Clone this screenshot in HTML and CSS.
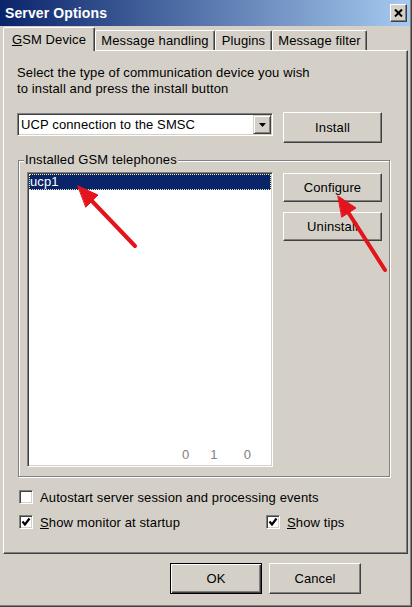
FILE: index.html
```html
<!DOCTYPE html>
<html lang="en">
<head>
  <meta charset="UTF-8">
  <meta name="viewport" content="width=device-width, initial-scale=1.0">
  <title>Server Options</title>
  <link rel="stylesheet" href="styles.css">
</head>
<body>
  <div class="window">
    <div class="titlebar">
      <span class="title">Server Options</span>
      <span class="close">
        <svg width="9" height="8" viewBox="0 0 9 8"><path d="M1 0.5 L8 7.5 M8 0.5 L1 7.5" stroke="#000" stroke-width="2"/></svg>
      </span>
    </div>
    <div class="tabs">
      <div class="tab active"><u>G</u>SM Device</div>
      <div class="tab t-msg">Message handling</div>
      <div class="tab t-plug">Plugins</div>
      <div class="tab t-filter">Message filter</div>
    </div>
    <div class="panel">
      <p class="intro">Select the type of communication device you wish<br>to install and press the install button</p>
      <div class="install-row">
        <div class="combo">
          <span class="combo-text">UCP connection to the SMSC</span>
          <span class="combo-btn">
            <svg width="7" height="4" viewBox="0 0 7 4"><path d="M0 0 H7 L3.5 4 Z" fill="#000"/></svg>
          </span>
        </div>
        <button class="btn install">Install</button>
      </div>
      <div class="group">
        <div class="group-label">Installed GSM telephones</div>
        <div class="group-body">
          <div class="listbox">
            <div class="list-item selected">ucp1</div>
            <div class="list-counts"><span>0</span><span class="c2">1</span><span class="c3">0</span></div>
          </div>
          <div class="side-btns">
            <button class="btn side">Configure</button>
            <button class="btn side">Uninstall</button>
          </div>
        </div>
      </div>
      <div class="options">
        <div class="check"><span class="box"></span>Autostart server session and processing events</div>
        <div class="options-row">
          <div class="check">
            <span class="box"><svg width="10" height="10" viewBox="0 0 10 10"><path d="M1.5 4.5 L4 7.5 L8.5 1.5" fill="none" stroke="#000" stroke-width="2.2"/></svg></span>
            <span><u>S</u>how monitor at startup</span>
          </div>
          <div class="check">
            <span class="box"><svg width="10" height="10" viewBox="0 0 10 10"><path d="M1.5 4.5 L4 7.5 L8.5 1.5" fill="none" stroke="#000" stroke-width="2.2"/></svg></span>
            <span><u>S</u>how tips</span>
          </div>
        </div>
      </div>
    </div>
    <div class="footer">
      <button class="btn dlg default">OK</button>
      <button class="btn dlg">Cancel</button>
    </div>
    <!-- red annotation arrows from the screenshot -->
    <svg class="arrows" width="412" height="607" viewBox="0 0 412 607">
      <g stroke="#E3141C" stroke-width="4" stroke-linecap="round" fill="#E3141C">
        <line x1="135" y1="246" x2="91" y2="200"/>
        <polygon points="78,186 98,195 86,207" stroke-width="1"/>
        <line x1="385" y1="270" x2="348" y2="212"/>
        <polygon points="338,196 356,208 342,217" stroke-width="1"/>
      </g>
    </svg>
  </div>
</body>
</html>
```

FILE: styles.css
```css
body { margin: 0; background: #D4D0C8; font-family: "Liberation Sans", Arial, sans-serif; font-size: 13px; letter-spacing: 0.12px; color: #000; }
.window { position: relative; width: 412px; height: 607px; box-sizing: border-box; padding: 0 1px 1px 0; border-right: 1px solid #404040; border-bottom: 1px solid #404040; box-shadow: inset -1px -1px #808080; background: #D4D0C8; }

.titlebar { height: 26px; box-sizing: border-box; display: flex; align-items: center; justify-content: space-between; padding: 0 3px 0 5px; background: linear-gradient(to right, #0A246A, #A6CAF0); color: #fff; font-weight: bold; font-size: 14px; }
.close { width: 17px; height: 18px; box-sizing: border-box; display: flex; align-items: center; justify-content: center; background: #D4D0C8; border: 1px solid; border-color: #fff #404040 #404040 #fff; box-shadow: inset -1px -1px #808080; }

.tabs { display: flex; align-items: flex-end; height: 23px; margin-top: 1px; padding-left: 3px; position: relative; z-index: 1; }
.tab { height: 20px; box-sizing: border-box; display: flex; align-items: center; justify-content: center; border: 1px solid; border-bottom: 0; border-color: #fff #404040 transparent #fff; border-radius: 2px 2px 0 0; box-shadow: inset -1px 0 #808080; background: #D4D0C8; white-space: nowrap; }
.tab.active { width: 92px; height: 24px; margin-bottom: -1px; }
.tab.t-msg { width: 120px; }
.tab.t-plug { width: 57px; }
.tab.t-filter { width: 95px; }

.panel { margin-left: 3px; width: 405px; height: 504px; box-sizing: border-box; padding-left: 13px; border: 1px solid; border-color: #fff #404040 #404040 #fff; box-shadow: inset -1px -1px #808080; }
.intro { margin: 14px 0 0; line-height: 16px; }

.install-row { display: flex; align-items: flex-start; margin-top: 15px; }
.combo { width: 256px; height: 23px; margin-top: 1px; box-sizing: border-box; display: flex; align-items: center; background: #fff; border: 1px solid; border-color: #808080 #fff #fff #808080; box-shadow: inset 1px 1px #404040, inset -1px -1px #D4D0C8; padding: 1px; }
.combo-text { flex: 1; padding-left: 2px; }
.combo-btn { width: 18px; height: 19px; box-sizing: border-box; display: flex; align-items: center; justify-content: center; background: #D4D0C8; border: 1px solid; border-color: #D4D0C8 #404040 #404040 #D4D0C8; box-shadow: inset 1px 1px #fff, inset -1px -1px #808080; }

.btn { font: inherit; letter-spacing: inherit; color: #000; background: #D4D0C8; border: 1px solid; border-color: #fff #404040 #404040 #fff; box-shadow: inset -1px -1px #808080; padding: 0; }
.btn.install { margin-left: 10px; width: 99px; height: 31px; }
.btn.side { width: 99px; height: 29px; }
.btn.dlg { width: 92px; height: 31px; }
.btn.default { border-color: #000; box-shadow: inset 1px 1px #fff, inset -1px -1px #404040, inset -2px -2px #808080; }

.group { margin: 17px 0 0 1px; width: 372px; box-sizing: border-box; border: 1px solid #808080; box-shadow: 1px 1px #fff, inset 1px 1px #fff; padding: 0 7px 9px 8px; }
.group-label { width: max-content; margin: -9px 0 0 -3px; padding: 0 1px; line-height: 16px; background: #D4D0C8; }
.group-body { display: flex; margin-top: 4px; }
.listbox { width: 246px; height: 295px; box-sizing: border-box; display: flex; flex-direction: column; padding: 1px; background: #fff; border: 1px solid; border-color: #808080 #fff #fff #808080; box-shadow: inset 1px 1px #404040, inset -1px -1px #D4D0C8; }
.list-item { height: 16px; line-height: 16px; padding-left: 1px; }
.list-item.selected { background: #0A246A; color: #fff; outline: 1px dotted #E8E8C0; outline-offset: -1px; }
.list-counts { margin-top: auto; margin-bottom: 2px; padding-left: 153px; line-height: 16px; color: #808080; }
.list-counts .c2 { margin-left: 21px; }
.list-counts .c3 { margin-left: 26px; }
.side-btns { display: flex; flex-direction: column; gap: 10px; margin: 1px 0 0 10px; }

.options { margin-top: 11px; }
.options-row { display: grid; grid-template-columns: 247px auto; margin-top: 7px; }
.check { display: flex; align-items: center; gap: 7px; height: 18px; margin-left: 2px; }
.box { width: 14px; height: 14px; box-sizing: border-box; display: flex; align-items: center; justify-content: center; background: #fff; border: 1px solid; border-color: #808080 #fff #fff #808080; box-shadow: inset 1px 1px #404040, inset -1px -1px #D4D0C8; }

.footer { display: flex; justify-content: flex-end; gap: 7px; height: 51px; box-sizing: border-box; padding: 9px 49px 0 0; }

.arrows { position: absolute; left: 0; top: 0; pointer-events: none; }
```
